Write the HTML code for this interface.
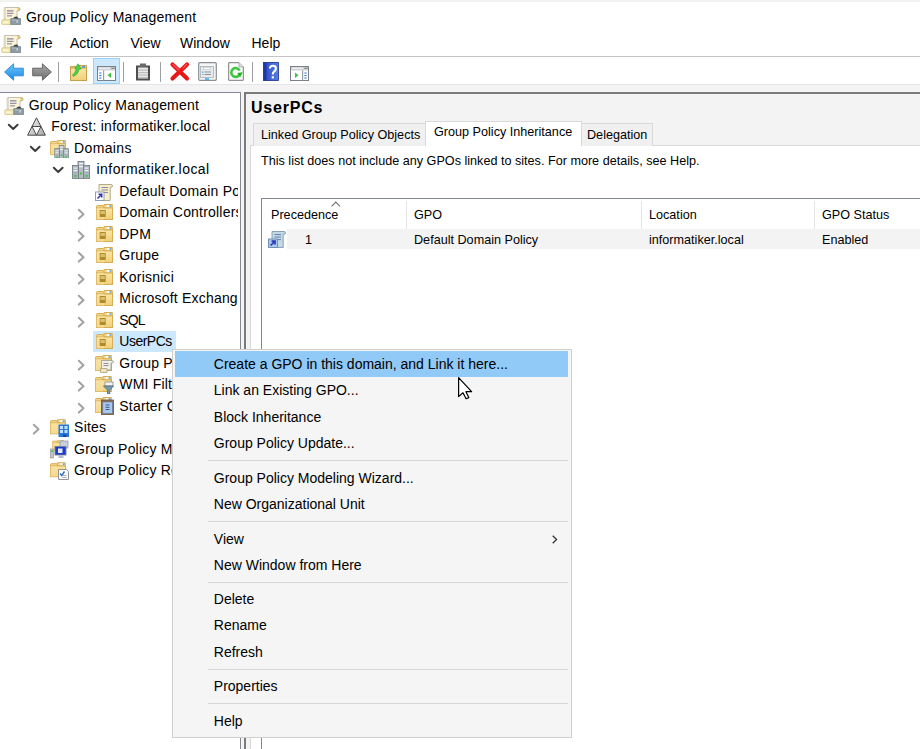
<!DOCTYPE html>
<html><head><meta charset="utf-8">
<style>
*{margin:0;padding:0;box-sizing:border-box}
html,body{width:920px;height:749px;overflow:hidden;background:#fff}
body{position:relative;font-family:"Liberation Sans",sans-serif;color:#000}
.a{position:absolute}
.t{position:absolute;white-space:nowrap;font-size:14px;line-height:16px;color:#000}
.s{position:absolute;white-space:nowrap;font-size:13.5px;line-height:15px;color:#000;transform:scaleX(0.935);transform-origin:0 0}
.tr{letter-spacing:0.2px}
svg{position:absolute;overflow:visible}
</style></head><body>


<svg width="0" height="0" style="position:absolute">
<defs>
 <linearGradient id="gfold" x1="0" y1="0" x2="0" y2="1"><stop offset="0" stop-color="#fbe6a6"/><stop offset="1" stop-color="#f0cf78"/></linearGradient>
 <linearGradient id="gtri" x1="0" y1="0" x2="1" y2="1"><stop offset="0" stop-color="#f4f4f4"/><stop offset="1" stop-color="#a8a8a8"/></linearGradient>
 <symbol id="folder" viewBox="0 0 17 16">
  <path d="M0.5 2.5 Q0.5 1.5 1.5 1.5 L7 1.5 L8 3 L16.5 3 L16.5 15.5 L0.5 15.5 Z" fill="#f3d485" stroke="#d6ad55" stroke-width="1"/>
  <path d="M8 0.5 L16 0.5 Q16.8 0.5 16.8 1.5 L16.8 4 L8 4 Z" fill="#f6dc95" stroke="#d6ad55" stroke-width="1"/>
  <rect x="11" y="1.2" width="4" height="1.6" fill="#fff"/><rect x="13.5" y="1.2" width="2" height="1.6" fill="#5aa0e0"/>
  <rect x="0.5" y="4" width="16" height="11.5" fill="url(#gfold)" stroke="#d6ad55"/>
  <path d="M0.5 4 L8 4 L8 15.5 L0.5 15.5 Z" fill="#f8e0a0" opacity="0.6"/>
 </symbol>
 <symbol id="ou" viewBox="0 0 17 16">
  <use href="#folder"/>
  <rect x="3.7" y="6" width="6" height="7" fill="#b08a28"/>
  <rect x="4.5" y="7" width="4.4" height="3" fill="#d8c070"/>
 </symbol>
 <symbol id="servers" viewBox="0 0 18 18">
  <g stroke="#6e7880" stroke-width="0.8">
   <rect x="6" y="0.4" width="6" height="17" fill="#b4bcc4"/>
   <rect x="0.4" y="4.5" width="6" height="13" fill="#aab2ba"/>
   <rect x="11.6" y="4.5" width="6" height="13" fill="#aab2ba"/>
  </g>
  <g fill="#f0f4f6"><rect x="7" y="2" width="4" height="1.2"/><rect x="7" y="5" width="4" height="1.2"/><rect x="1.4" y="6.5" width="4" height="1.2"/><rect x="1.4" y="9" width="4" height="1.2"/><rect x="12.6" y="6.5" width="4" height="1.2"/><rect x="12.6" y="9" width="4" height="1.2"/></g>
  <g fill="#3cc83c"><rect x="8" y="11.5" width="2" height="2"/><rect x="2.4" y="14" width="2" height="2"/><rect x="13.6" y="14" width="2" height="2"/></g>
 </symbol>
 <symbol id="scroll" viewBox="0 0 16 17">
  <path d="M2.5 1.5 L14 1.5 Q15.5 1.5 15.5 3 Q15.5 4 14 4 L13 4 L13 15.5 L2.5 15.5 Z" fill="#f8f0cc" stroke="#a8a078" stroke-width="0.9"/>
  <g fill="#8a8aa8"><rect x="4.5" y="4" width="6.5" height="1"/><rect x="4.5" y="6.5" width="6.5" height="1"/><rect x="4.5" y="9" width="6.5" height="1"/></g>
  <path d="M0.5 12.5 L10 12.5 L10 16.5 L0.5 16.5 Z" fill="#ecdca0" stroke="#b8a868" stroke-width="0.8"/>
 </symbol>
 <symbol id="gpm" viewBox="0 0 20 18">
  <path d="M3.2 1.2 Q3.2 0.5 4 0.5 L17.2 0.5 Q19 0.5 19 2.3 Q19 3.8 17.2 3.8 L16 3.8 L16 13.5 L3.2 13.5 Z" fill="#fbf4d6" stroke="#b8b4a0" stroke-width="0.8"/>
  <path d="M3.2 1 L5 1 L5 13.5 L3.2 13.5Z" fill="#e0dccc"/>
  <path d="M16.2 0.6 Q19 0.6 19 2.3 Q19 3.8 16.6 3.8" fill="#e6d080" stroke="#c8aa58" stroke-width="0.6"/>
  <g fill="#8c8aa6"><rect x="6" y="3.2" width="6.5" height="1.3"/><rect x="6" y="5.8" width="6.5" height="1.1"/><rect x="6" y="8.3" width="5" height="1.1"/></g>
  <path d="M0.8 13.6 Q0.8 12.8 1.6 12.8 L10 12.8 L10 17.6 L1.6 17.6 Q0.8 17.6 0.8 16.8 Z" fill="#f4e8b4" stroke="#cdbb80" stroke-width="0.7"/>
  <rect x="2" y="14.6" width="5" height="1.2" fill="#fffbe8"/>
  <path d="M9.8 11.6 L19.6 11.6 L19.6 17.6 L9.8 17.6 Z" fill="#8d9ca6" stroke="#6c7a84" stroke-width="0.7"/>
  <path d="M12 11.6 Q13.2 9.4 15.5 9.6 Q17 9.8 17.5 11.6 Z" fill="#3e4246"/>
  <rect x="15.6" y="13" width="1" height="2.6" fill="#e8eef2"/>
  <rect x="10.8" y="12.6" width="4" height="0.9" fill="#b4c2ca"/>
 </symbol>
 <symbol id="gpolink" viewBox="0 0 18 17">
  <path d="M4 0.5 L16 0.5 Q17.5 0.5 17.5 2 Q17.5 3.3 16 3.3 L15.2 3.3 L15.2 16.5 L4 16.5 Z" fill="#f7efc8" stroke="#a8a080" stroke-width="0.9"/>
  <g fill="#8a8aa8"><rect x="6.5" y="3" width="6.5" height="1"/><rect x="6.5" y="5.5" width="6.5" height="1"/><rect x="9" y="8" width="4" height="1"/></g>
  <rect x="0.5" y="8" width="8.5" height="8.5" fill="#fff" stroke="#8c94a8" stroke-width="0.9"/>
  <path d="M2.5 14.5 L6.5 10.5 M3.5 10.3 L6.7 10.3 L6.7 13.5" stroke="#3a3aa8" stroke-width="1.6" fill="none"/>
 </symbol>

 <symbol id="forest" viewBox="0 0 19 19">
  <path d="M9.5 0.8 L18.4 18.2 L0.6 18.2 Z" fill="url(#gtri)" stroke="#4a4a4a" stroke-width="1"/>
  <path d="M5.05 9.5 L13.95 9.5 L9.5 18.2 Z" fill="#fff" stroke="#4a4a4a" stroke-width="1"/>
 </symbol>
 <symbol id="domains" viewBox="0 0 19 18">
  <g transform="scale(0.95)"><use href="#folder" width="17" height="16"/></g>
  <g transform="translate(4.2,5) scale(0.82)"><use href="#servers" width="18" height="18"/></g>
 </symbol>
 <symbol id="gpos" viewBox="0 0 19 18">
  <use href="#folder" width="17" height="16"/>
  <path d="M6.5 5.5 L17 5.5 Q18.5 5.5 18.5 7 Q18.5 8 17 8 L16 8 L16 15 L6.5 15 Z" fill="#f2f0e6" stroke="#9a9a90" stroke-width="0.8"/>
  <g fill="#9090a0"><rect x="8.5" y="8" width="5" height="1"/><rect x="8.5" y="10" width="5" height="1"/></g>
  <path d="M5.5 13.5 L12 13.5 L12 17.5 L5.5 17.5Z" fill="#ece4c0" stroke="#a8a080" stroke-width="0.8"/>
 </symbol>
 <symbol id="wmi" viewBox="0 0 19 18">
  <use href="#folder" width="17" height="16"/>
  <rect x="10" y="6" width="8" height="4" fill="#f4f4f4" stroke="#8a8a8a" stroke-width="0.8"/>
  <path d="M8.5 10 L18.5 10 L14.8 14 L14.8 18 L12.5 18 L12.5 14 Z" fill="#7a9ab0" stroke="#4e6a80" stroke-width="0.8"/>
 </symbol>
 <symbol id="starter" viewBox="0 0 19 18">
  <use href="#folder" width="17" height="16"/>
  <rect x="6.5" y="3" width="12" height="15" fill="#8f6e58" stroke="#6a4e3c" stroke-width="0.8"/>
  <rect x="7.8" y="5" width="9.5" height="11.5" fill="#a8c8f0" stroke="#5a7aa0" stroke-width="0.6"/>
  <g fill="#3a5a88"><rect x="10.5" y="7.5" width="4" height="1"/><rect x="10.5" y="9.8" width="4" height="1"/><rect x="10.5" y="12" width="4" height="1"/></g>
 </symbol>
 <symbol id="sites" viewBox="0 0 19 18">
  <use href="#folder" width="16" height="15.5"/>
  <rect x="8.5" y="5.5" width="10.5" height="12.5" fill="#2a7ad8"/>
  <g fill="#bfe0ff"><rect x="10" y="7" width="3" height="3"/><rect x="14.5" y="7" width="3" height="3"/><rect x="10" y="11" width="3" height="3"/><rect x="14.5" y="11" width="3" height="3"/></g>
  <rect x="13" y="15.5" width="3.5" height="2.5" fill="#0d4aa0"/>
 </symbol>
 <symbol id="modeling" viewBox="0 0 19 19">
  <g transform="translate(2,0) scale(0.7)"><use href="#folder" width="17" height="16"/></g>
  <rect x="10" y="1" width="8" height="7" fill="#c8d0e0" stroke="#8890a0" stroke-width="0.7"/>
  <rect x="0.5" y="9" width="3" height="9" fill="#c0c4c8" stroke="#8a8e92" stroke-width="0.6"/>
  <rect x="1.2" y="10.5" width="1.6" height="1.6" fill="#2ac82a"/>
  <rect x="5" y="6.5" width="11" height="8.5" fill="#1a3ad0" stroke="#7a8090" stroke-width="0.9"/>
  <rect x="8" y="8.5" width="4.5" height="4.5" fill="#e8e8f0"/>
  <rect x="8.5" y="15.5" width="5" height="2.5" fill="#b8bcc4"/>
 </symbol>
 <symbol id="results" viewBox="0 0 19 18">
  <use href="#folder" width="16" height="15.5"/>
  <path d="M8.5 7.5 L16.5 7.5 L18.5 9.5 L18.5 17.5 L8.5 17.5 Z" fill="#fafafa" stroke="#8a8a8a" stroke-width="0.9"/>
  <path d="M10 11.5 L11.8 13.5 L14.5 9.5" fill="none" stroke="#2a70c8" stroke-width="1.4"/>
  <g fill="#a0a8b8"><rect x="12.5" y="13" width="4" height="0.9"/><rect x="12.5" y="15" width="4" height="0.9"/></g>
 </symbol>

 <linearGradient id="gblue" x1="0" y1="0" x2="0" y2="1"><stop offset="0" stop-color="#6cc8ff"/><stop offset="1" stop-color="#1a88e0"/></linearGradient>
 <linearGradient id="ggray" x1="0" y1="0" x2="0" y2="1"><stop offset="0" stop-color="#a8a8a8"/><stop offset="1" stop-color="#6e6e6e"/></linearGradient>
 <linearGradient id="ghelp" x1="0" y1="0" x2="1" y2="0"><stop offset="0" stop-color="#2a48c0"/><stop offset="1" stop-color="#5a80e0"/></linearGradient>
 <symbol id="winpane" viewBox="0 0 19 15">
  <rect x="0.5" y="0.5" width="18" height="14" fill="#fff" stroke="#7b8087" stroke-width="1"/>
  <rect x="1" y="1" width="17" height="3.5" fill="#cfd3d8"/>
  <rect x="2" y="1.7" width="11" height="1" fill="#f4f4f4"/>
  <rect x="14.5" y="1.7" width="1.2" height="1.2" fill="#666"/><rect x="16.3" y="1.7" width="1.2" height="1.2" fill="#666"/>
  <rect x="6" y="4.5" width="1.2" height="10" fill="#9aa0a8"/>
  <g fill="#3a7ad8"><rect x="2.2" y="6.5" width="2.2" height="1.1"/><rect x="2.2" y="9" width="2.2" height="1.1"/><rect x="2.2" y="11.5" width="2.2" height="1.1"/></g>
  <path d="M14 6.5 L14 12 L10.5 9.25 Z" fill="#3ec43e"/>
 </symbol>

 <symbol id="gpolinkb" viewBox="0 0 18 17">
  <path d="M4 0.5 L16 0.5 Q17.5 0.5 17.5 2 Q17.5 3.3 16 3.3 L15.2 3.3 L15.2 16.5 L4 16.5 Z" fill="#c4d8e6" stroke="#7f9ab0" stroke-width="0.9"/>
  <g fill="#6a8cb0"><rect x="6.5" y="3" width="6.5" height="1.1"/><rect x="6.5" y="5.5" width="6.5" height="1.1"/><rect x="9" y="8" width="4" height="1.1"/></g>
  <rect x="0.5" y="8" width="9" height="8.5" fill="#a8c8ea" stroke="#6a8cb4" stroke-width="0.9"/>
  <path d="M2.6 14.5 L6.8 10.3 M3.6 10.1 L7 10.1 L7 13.5" stroke="#2a3ab8" stroke-width="1.7" fill="none"/>
 </symbol>

 <symbol id="winpane2" viewBox="0 0 19 15">
  <rect x="0.5" y="0.5" width="18" height="14" fill="#fff" stroke="#7b8087" stroke-width="1"/>
  <rect x="1" y="1" width="17" height="3.5" fill="#cfd3d8"/>
  <rect x="2" y="1.7" width="11" height="1" fill="#f4f4f4"/>
  <rect x="14.5" y="1.7" width="1.2" height="1.2" fill="#666"/><rect x="16.3" y="1.7" width="1.2" height="1.2" fill="#666"/>
  <rect x="12" y="4.5" width="1.2" height="10" fill="#9aa0a8"/>
  <g fill="#3a7ad8"><rect x="14.4" y="6.5" width="2.2" height="1.1"/><rect x="14.4" y="9" width="2.2" height="1.1"/><rect x="14.4" y="11.5" width="2.2" height="1.1"/></g>
  <path d="M5 6.5 L5 12 L8.5 9.25 Z" fill="#3ec43e"/>
 </symbol>
</defs></svg>

<!-- top strip -->
<div class="a" style="left:0;top:0;width:920px;height:2px;background:#f2f2f2"></div>

<!-- title -->
<svg style="left:1px;top:7px" width="20" height="18"><use href="#gpm"/></svg>
<svg style="left:1px;top:35px" width="20" height="18"><use href="#gpm"/></svg>

<div class="t tr" style="left:26px;top:8.6px">Group Policy Management</div>
<!-- menu bar -->
<div class="t" style="left:30px;top:34.6px">File</div>
<div class="t" style="left:70px;top:34.6px">Action</div>
<div class="t" style="left:130.5px;top:34.6px">View</div>
<div class="t" style="left:180px;top:34.6px">Window</div>
<div class="t" style="left:251.5px;top:34.6px">Help</div>

<div class="a" style="left:0;top:56px;width:920px;height:1px;background:#c4c4c4"></div>
<!-- toolbar -->
<div class="a" style="left:0;top:84px;width:920px;height:1px;background:#e6e6e6"></div>
<div class="a" style="left:0;top:85px;width:920px;height:664px;background:#f4f4f4"></div>

<!-- hover button -->
<div class="a" style="left:93px;top:58px;width:27px;height:26px;background:#cce8ff;border:1px solid #99d1ff"></div>
<!-- separators -->
<div class="a" style="left:58px;top:62px;width:1px;height:20px;background:#a0a0a0"></div>
<div class="a" style="left:123px;top:62px;width:1px;height:20px;background:#a0a0a0"></div>
<div class="a" style="left:160px;top:62px;width:1px;height:20px;background:#a0a0a0"></div>
<div class="a" style="left:252px;top:62px;width:1px;height:20px;background:#a0a0a0"></div>


<!-- toolbar icons -->
<svg style="left:3.5px;top:63px" width="20" height="18"><path d="M0.6 9 L9.6 0.8 L9.6 5.2 L19.3 5.2 L19.3 12.8 L9.6 12.8 L9.6 17.2 Z" fill="url(#gblue)" stroke="#2b86d8" stroke-width="0.9" stroke-linejoin="round"/></svg>
<svg style="left:31.5px;top:63px" width="20" height="18"><path d="M19.4 9 L10.4 0.8 L10.4 5.2 L0.7 5.2 L0.7 12.8 L10.4 12.8 L10.4 17.2 Z" fill="url(#ggray)" stroke="#5c5c5c" stroke-width="0.9" stroke-linejoin="round"/></svg>
<svg style="left:69.5px;top:63px" width="18" height="18">
 <path d="M0.5 3.5 L7 3.5 L8 2.5 L16.5 2.5 L16.5 17.5 L0.5 17.5 Z" fill="#f3d485" stroke="#c9a04a" stroke-width="1"/>
 <rect x="0.5" y="5" width="16" height="12.5" fill="url(#gfold)" stroke="#c9a04a"/>
 <rect x="12" y="3.2" width="3" height="1.5" fill="#4a90e0"/>
 <path d="M2.5 12 Q5 10 6.5 6 L4.8 6 L8 0.8 L11.2 6 L9.3 6 Q8 11.5 3.5 13.5 Z" fill="#4ad24a" stroke="#2aa02a" stroke-width="0.6"/>
</svg>
<svg style="left:97px;top:65.5px" width="19" height="15"><use href="#winpane"/></svg>
<svg style="left:135px;top:62.5px" width="16" height="18">
 <rect x="1" y="2.5" width="14" height="15" fill="#4e4e4e"/>
 <rect x="3" y="4.5" width="10" height="11" fill="#e8e8e8"/>
 <g fill="#bcbcbc"><rect x="3" y="6.5" width="10" height="1.2"/><rect x="3" y="9" width="10" height="1.2"/><rect x="3" y="11.5" width="10" height="1.2"/><rect x="3" y="14" width="10" height="1"/></g>
 <rect x="5" y="0.5" width="6" height="3.5" fill="#6a6a6a"/>
</svg>
<svg style="left:169.5px;top:62px" width="20" height="19"><path d="M2.5 2.5 L17 16.5 M17 2.5 L2.5 16.5" stroke="#e81818" stroke-width="4.2" stroke-linecap="round"/><path d="M3 2.5 L9 8.2 M16.5 2.5 L13 6" stroke="#ff7070" stroke-width="1.2" stroke-linecap="round" opacity="0.7"/></svg>
<svg style="left:197.5px;top:62px" width="19" height="19">
 <rect x="0.7" y="0.7" width="17.6" height="17.6" rx="1" fill="#f4f6f8" stroke="#8a8e94" stroke-width="1.2"/>
 <rect x="2.5" y="4.5" width="13" height="11" fill="#e8ebee" stroke="#a8adb4" stroke-width="0.8"/>
 <rect x="5.5" y="5.5" width="7" height="2" fill="#fff" stroke="#b0b4b8" stroke-width="0.5"/>
 <rect x="4" y="9.5" width="1.5" height="1.2" fill="#30a8e8"/><rect x="6.5" y="9.5" width="6.5" height="1" fill="#8c9096"/>
 <rect x="4" y="12" width="1.5" height="1" fill="#9a9ea4"/><rect x="6.5" y="12" width="6.5" height="1" fill="#8c9096"/>
 <rect x="7" y="16.2" width="4" height="1.6" fill="#30b0f0"/>
</svg>
<svg style="left:227.5px;top:62px" width="16" height="19">
 <path d="M0.7 0.7 L11 0.7 L15.3 5 L15.3 18.3 L0.7 18.3 Z" fill="#fafafa" stroke="#7a7a7a" stroke-width="1"/>
 <path d="M11 0.7 L11 5 L15.3 5" fill="#e0e0e0" stroke="#9a9a9a" stroke-width="0.7"/>
 <path d="M11.6 8.5 A4.4 4.4 0 1 0 11.8 12" fill="none" stroke="#3cc83c" stroke-width="2.6"/>
 <path d="M9.2 11 L14.6 10.2 L12.3 15 Z" fill="#20b020"/>
</svg>
<svg style="left:263px;top:62px" width="16" height="19">
 <rect x="0.5" y="0.5" width="15" height="18" fill="url(#ghelp)" stroke="#1a2e90" stroke-width="0.8"/>
 <rect x="0.5" y="0.5" width="3" height="18" fill="#1a3aa8"/>
 <path d="M6.9 6.6 Q6.9 3.7 9.9 3.7 Q12.9 3.7 12.9 6.5 Q12.9 8.4 11 9.7 Q9.8 10.5 9.8 12.4" fill="none" stroke="#fff" stroke-width="2.1"/><rect x="8.7" y="14.2" width="2.2" height="2.2" fill="#fff"/>
</svg>
<svg style="left:290px;top:65.5px" width="19" height="15"><use href="#winpane2"/></svg>

<!-- left pane -->
<div class="a" style="left:0;top:92px;width:241px;height:657px;background:#fff;border-top:1px solid #828790;border-right:1px solid #828790"></div>

<div class="a" style="left:0;top:93px;width:238px;height:656px;overflow:hidden">
<div class="a" style="left:92.5px;top:237.5px;width:83px;height:21.5px;background:#cce8ff"></div>
<div class="t tr" style="left:28.7px;top:3.75px">Group Policy Management</div>
<div class="t tr" style="left:51.3px;top:25.25px;letter-spacing:0.25px">Forest: informatiker.local</div>
<svg style="left:7.8px;top:31.2px" width="11" height="6"><path d="M0.8 0.8 L5.2 5 L9.6 0.8" fill="none" stroke="#3c3c3c" stroke-width="2" stroke-linecap="round" stroke-linejoin="round"/></svg>
<div class="t tr" style="left:74.1px;top:46.75px;letter-spacing:0.35px">Domains</div>
<svg style="left:30.4px;top:52.7px" width="11" height="6"><path d="M0.8 0.8 L5.2 5 L9.6 0.8" fill="none" stroke="#3c3c3c" stroke-width="2" stroke-linecap="round" stroke-linejoin="round"/></svg>
<div class="t tr" style="left:96.5px;top:68.25px;letter-spacing:0.45px">informatiker.local</div>
<svg style="left:53.1px;top:74.2px" width="11" height="6"><path d="M0.8 0.8 L5.2 5 L9.6 0.8" fill="none" stroke="#3c3c3c" stroke-width="2" stroke-linecap="round" stroke-linejoin="round"/></svg>
<div class="t tr" style="left:119.3px;top:89.75px">Default Domain Policy</div>
<div class="t tr" style="left:119.3px;top:111.25px">Domain Controllers</div>
<svg style="left:78.2px;top:116.3px" width="7" height="11"><path d="M0.8 0.8 L5.5 5.2 L0.8 9.6" fill="none" stroke="#a2a2a2" stroke-width="2" stroke-linecap="round" stroke-linejoin="round"/></svg>
<div class="t tr" style="left:119.3px;top:132.75px">DPM</div>
<svg style="left:78.2px;top:137.8px" width="7" height="11"><path d="M0.8 0.8 L5.5 5.2 L0.8 9.6" fill="none" stroke="#a2a2a2" stroke-width="2" stroke-linecap="round" stroke-linejoin="round"/></svg>
<div class="t tr" style="left:119.3px;top:154.25px">Grupe</div>
<svg style="left:78.2px;top:159.3px" width="7" height="11"><path d="M0.8 0.8 L5.5 5.2 L0.8 9.6" fill="none" stroke="#a2a2a2" stroke-width="2" stroke-linecap="round" stroke-linejoin="round"/></svg>
<div class="t tr" style="left:119.3px;top:175.75px">Korisnici</div>
<svg style="left:78.2px;top:180.8px" width="7" height="11"><path d="M0.8 0.8 L5.5 5.2 L0.8 9.6" fill="none" stroke="#a2a2a2" stroke-width="2" stroke-linecap="round" stroke-linejoin="round"/></svg>
<div class="t tr" style="left:119.3px;top:197.25px">Microsoft Exchange Security Groups</div>
<svg style="left:78.2px;top:202.3px" width="7" height="11"><path d="M0.8 0.8 L5.5 5.2 L0.8 9.6" fill="none" stroke="#a2a2a2" stroke-width="2" stroke-linecap="round" stroke-linejoin="round"/></svg>
<div class="t tr" style="left:119.3px;top:218.75px;letter-spacing:-0.9px">SQL</div>
<svg style="left:78.2px;top:223.8px" width="7" height="11"><path d="M0.8 0.8 L5.5 5.2 L0.8 9.6" fill="none" stroke="#a2a2a2" stroke-width="2" stroke-linecap="round" stroke-linejoin="round"/></svg>
<div class="t tr" style="left:119.3px;top:240.25px;letter-spacing:-0.5px">UserPCs</div>
<div class="t tr" style="left:119.3px;top:261.75px">Group Policy Objects</div>
<svg style="left:78.2px;top:266.8px" width="7" height="11"><path d="M0.8 0.8 L5.5 5.2 L0.8 9.6" fill="none" stroke="#a2a2a2" stroke-width="2" stroke-linecap="round" stroke-linejoin="round"/></svg>
<div class="t tr" style="left:119.3px;top:283.25px">WMI Filters</div>
<svg style="left:78.2px;top:288.3px" width="7" height="11"><path d="M0.8 0.8 L5.5 5.2 L0.8 9.6" fill="none" stroke="#a2a2a2" stroke-width="2" stroke-linecap="round" stroke-linejoin="round"/></svg>
<div class="t tr" style="left:119.3px;top:304.75px">Starter GPOs</div>
<svg style="left:78.2px;top:309.8px" width="7" height="11"><path d="M0.8 0.8 L5.5 5.2 L0.8 9.6" fill="none" stroke="#a2a2a2" stroke-width="2" stroke-linecap="round" stroke-linejoin="round"/></svg>
<div class="t tr" style="left:74.1px;top:326.25px">Sites</div>
<svg style="left:32.9px;top:331.3px" width="7" height="11"><path d="M0.8 0.8 L5.5 5.2 L0.8 9.6" fill="none" stroke="#a2a2a2" stroke-width="2" stroke-linecap="round" stroke-linejoin="round"/></svg>
<div class="t tr" style="left:74.1px;top:347.75px">Group Policy Modeling</div>
<div class="t tr" style="left:74.1px;top:369.25px">Group Policy Results</div>
<svg style="left:4px;top:4.0px" width="20" height="18"><use href="#gpm"/></svg>
<svg style="left:27px;top:24.0px" width="19" height="19"><use href="#forest"/></svg>
<svg style="left:49.7px;top:46.7px" width="19" height="18"><use href="#domains"/></svg>
<svg style="left:72px;top:68.2px" width="18" height="18"><use href="#servers"/></svg>
<svg style="left:95px;top:90.7px" width="18" height="17"><use href="#gpolink"/></svg>
<svg style="left:96px;top:111.3px" width="17" height="16"><use href="#ou"/></svg>
<svg style="left:96px;top:132.8px" width="17" height="16"><use href="#ou"/></svg>
<svg style="left:96px;top:154.3px" width="17" height="16"><use href="#ou"/></svg>
<svg style="left:96px;top:175.8px" width="17" height="16"><use href="#ou"/></svg>
<svg style="left:96px;top:197.3px" width="17" height="16"><use href="#ou"/></svg>
<svg style="left:96px;top:218.8px" width="17" height="16"><use href="#ou"/></svg>
<svg style="left:96px;top:240.3px" width="17" height="16"><use href="#ou"/></svg>
<svg style="left:95.1px;top:262.1px" width="19" height="18"><use href="#gpos"/></svg>
<svg style="left:95.1px;top:283.2px" width="19" height="18"><use href="#wmi"/></svg>
<svg style="left:95.1px;top:304.2px" width="19" height="18"><use href="#starter"/></svg>
<svg style="left:49.8px;top:326.2px" width="19" height="18"><use href="#sites"/></svg>
<svg style="left:49.8px;top:346.8px" width="19" height="19"><use href="#modeling"/></svg>
<svg style="left:49.8px;top:369.2px" width="19" height="18"><use href="#results"/></svg>
</div>

<!-- right pane -->
<div class="a" style="left:244px;top:92px;width:676px;height:657px;background:#f3f3f3;border-top:2px solid #7a7a7a;border-left:2px solid #7a7a7a"></div>
<div class="a" style="left:251px;top:98px;font-size:16px;line-height:20px;font-weight:bold;white-space:nowrap;letter-spacing:0.8px">UserPCs</div>

<!-- tab panel -->
<div class="a" style="left:250px;top:145px;width:670px;height:604px;background:#fff;border-top:1px solid #d9d9d9;border-left:1px solid #d9d9d9"></div>
<!-- tabs -->
<div class="a" style="left:253px;top:123px;width:173px;height:23px;background:#f0f0f0;border:1px solid #d9d9d9;border-bottom:none"></div>
<div class="a" style="left:581px;top:123px;width:72px;height:23px;background:#f0f0f0;border:1px solid #d9d9d9;border-bottom:none"></div>
<div class="a" style="left:425px;top:121px;width:157px;height:25px;background:#fff;border:1px solid #d9d9d9;border-bottom:none"></div>
<div class="s" style="left:260.5px;top:127.3px">Linked Group Policy Objects</div>
<div class="s" style="left:434px;top:124.3px">Group Policy Inheritance</div>
<div class="s" style="left:587px;top:126.8px">Delegation</div>
<div class="s" style="left:261px;top:153.3px">This list does not include any GPOs linked to sites. For more details, see Help.</div>

<!-- list view -->
<div class="a" style="left:261px;top:198px;width:659px;height:551px;background:#fff;border-top:1px solid #828790;border-left:1px solid #828790"></div>
<div class="a" style="left:406px;top:201px;width:1px;height:28px;background:#e5e5e5"></div>
<div class="a" style="left:641px;top:201px;width:1px;height:28px;background:#e5e5e5"></div>
<div class="a" style="left:814px;top:201px;width:1px;height:28px;background:#e5e5e5"></div>
<div class="s" style="left:270.5px;top:207.2px">Precedence</div>
<div class="s" style="left:413.5px;top:207.2px">GPO</div>
<div class="s" style="left:649px;top:207.2px">Location</div>
<div class="s" style="left:822px;top:207.2px">GPO Status</div>
<div class="a" style="left:287px;top:229px;width:633px;height:20px;background:#f3f3f3"></div>
<svg style="left:268px;top:231px" width="18" height="17"><use href="#gpolinkb"/></svg>
<svg style="left:331px;top:201px" width="10" height="6"><path d="M0.6 5.4 L4.8 1 L9 5.4" fill="none" stroke="#707070" stroke-width="1.1"/></svg>
<div class="s" style="left:305px;top:232.4px">1</div>
<div class="s" style="left:414px;top:232.4px">Default Domain Policy</div>
<div class="s" style="left:649px;top:232.4px">informatiker.local</div>
<div class="s" style="left:822px;top:232.4px">Enabled</div>

<!-- context menu -->
<div class="a" style="left:172px;top:349px;width:400px;height:389px;background:#f5f5f5;border:1px solid #cdd0cd"></div>
<div class="a" style="left:175px;top:351px;width:393px;height:26px;background:#91c9f7"></div>
<div class="a" style="left:208px;top:460.2px;width:360px;height:1px;background:#d7d7d7"></div>
<div class="a" style="left:208px;top:521.1px;width:360px;height:1px;background:#d7d7d7"></div>
<div class="a" style="left:208px;top:581.8px;width:360px;height:1px;background:#d7d7d7"></div>
<div class="a" style="left:208px;top:669.1px;width:360px;height:1px;background:#d7d7d7"></div>
<div class="a" style="left:208px;top:703.3px;width:360px;height:1px;background:#d7d7d7"></div>
<div class="t" style="left:213.8px;top:355.85px">Create a GPO in this domain, and Link it here...</div>
<div class="t" style="left:213.8px;top:382.45px">Link an Existing GPO...</div>
<div class="t" style="left:213.8px;top:409.15px">Block Inheritance</div>
<div class="t" style="left:213.8px;top:434.65px">Group Policy Update...</div>
<div class="t" style="left:213.8px;top:469.85px">Group Policy Modeling Wizard...</div>
<div class="t" style="left:213.8px;top:495.95px">New Organizational Unit</div>
<div class="t" style="left:213.8px;top:530.95px">View</div>
<div class="t" style="left:213.8px;top:556.55px">New Window from Here</div>
<div class="t" style="left:213.8px;top:590.65px">Delete</div>
<div class="t" style="left:213.8px;top:616.95px">Rename</div>
<div class="t" style="left:213.8px;top:644.25px">Refresh</div>
<div class="t" style="left:213.8px;top:678.05px">Properties</div>
<div class="t" style="left:213.8px;top:713.45px">Help</div>
<svg style="left:551.5px;top:534.5px" width="6" height="9"><path d="M0.7 0.7 L4.6 4.5 L0.7 8.3" fill="none" stroke="#333" stroke-width="1.3"/></svg>
<svg style="left:458px;top:376.5px" width="15" height="23"><path d="M0.6 0.6 L0.6 19.6 L5 15.8 L8.1 21.8 L10.8 20.6 L7.9 14.7 L13.6 14.7 Z" fill="#fff" stroke="#000" stroke-width="1.2" stroke-linejoin="round"/></svg>
</body></html>
